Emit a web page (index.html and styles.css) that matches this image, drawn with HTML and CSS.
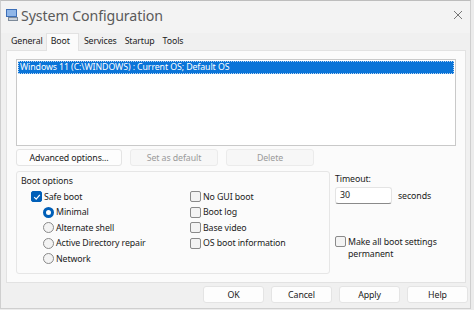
FILE: index.html
```html
<!DOCTYPE html>
<html>
<head>
<meta charset="utf-8">
<link rel="stylesheet" href="styles.css">
</head>
<body>
<div class="window">
  <div class="titlebar">
    <svg class="appicon" width="14" height="14" viewBox="0 0 14 14">
      <rect x="1" y="1" width="11" height="8" fill="#3d6fb8"/>
      <rect x="2" y="2" width="9" height="6" fill="#8fb6e8"/>
      <rect x="3" y="9" width="10" height="4" fill="#7d8a99"/>
      <rect x="4" y="10" width="8" height="2" fill="#c9d1da"/>
    </svg>
    <span class="title">System Configuration</span>
    <span class="close">
      <svg width="10" height="10" viewBox="0 0 10 10"><path d="M1 1 L9 9 M9 1 L1 9" stroke="#777" stroke-width="1"/></svg>
    </span>
  </div>
  <div class="tabs">
    <span class="tab">General</span>
    <span class="tab active">Boot</span>
    <span class="tab">Services</span>
    <span class="tab">Startup</span>
    <span class="tab">Tools</span>
  </div>
  <div class="panel">
    <div class="listbox">
      <div class="row selected">Windows 11 (C:\WINDOWS) : Current OS; Default OS</div>
    </div>
    <div class="btnrow">
      <button class="btn wide">Advanced options...</button>
      <button class="btn mid" disabled>Set as default</button>
      <button class="btn mid" disabled>Delete</button>
    </div>
    <div class="lower">
      <div class="group">
        <div class="glabel">Boot options</div>
        <div class="gcols">
          <div class="gleft">
            <label class="opt"><span class="cb checked"><svg width="8" height="8" viewBox="0 0 8 8"><path d="M1.2 4.2 L3.2 6.2 L6.8 1.8" fill="none" stroke="#fff" stroke-width="1.2"/></svg></span>Safe boot</label>
            <div class="radios">
              <label class="opt"><span class="rb on"></span>Minimal</label>
              <label class="opt"><span class="rb"></span>Alternate shell</label>
              <label class="opt"><span class="rb"></span>Active Directory repair</label>
              <label class="opt"><span class="rb"></span>Network</label>
            </div>
          </div>
          <div class="gright">
            <label class="opt"><span class="cb"></span>No GUI boot</label>
            <label class="opt"><span class="cb"></span>Boot log</label>
            <label class="opt"><span class="cb"></span>Base video</label>
            <label class="opt"><span class="cb"></span>OS boot information</label>
          </div>
        </div>
      </div>
      <div class="side">
        <div class="tlabel">Timeout:</div>
        <div class="trow">
          <div class="input">30</div>
          <span class="unit">seconds</span>
        </div>
        <label class="opt perm"><span class="cb"></span><span>Make all boot settings<br>permanent</span></label>
      </div>
    </div>
  </div>
  <div class="footer">
    <button class="btn foot">OK</button>
    <button class="btn foot">Cancel</button>
    <button class="btn foot">Apply</button>
    <button class="btn foot">Help</button>
  </div>
</div>
</body>
</html>
```

FILE: styles.css
```css
* { box-sizing: border-box; }
html, body { margin: 0; padding: 0; }
body {
  width: 474px;
  height: 310px;
  overflow: hidden;
  background: #ececec;
  font-family: "Noto Sans", "Open Sans", sans-serif;
  font-size: 8.8px;
  letter-spacing: -0.1px;
  color: #1a1a1a;
}
.window {
  width: 471px;
  height: 309px;
  background: #f0f0f0;
  border: 1px solid #cfcfcf;
  border-top-color: #bdbdbd;
  display: flex;
  flex-direction: column;
}
.titlebar {
  height: 32px;
  display: flex;
  align-items: center;
  padding-left: 4px;
  background: #f3f3f3;
}
.appicon { margin-right: 2px; margin-top: -4px; }
.title {
  font-size: 14.2px;
  color: #5a5a5a;
  flex: 1;
  margin-top: -3px;
}
.close {
  width: 20px;
  display: flex;
  justify-content: center;
  margin-right: 2px;
  margin-top: -5px;
}
.tabs {
  display: flex;
  align-items: flex-end;
  height: 17px;
  padding-left: 5px;
}
.tab {
  padding: 0 3px 2px 5px;
  color: #222;
  line-height: 14px;
}
.tab.active {
  background: #fbfbfb;
  border: 1px solid #e2e2e2;
  border-bottom: none;
  padding: 0 8px 3px 4px;
  margin-bottom: -1px;
  position: relative;
  z-index: 1;
}
.panel {
  margin: 0 4px 0 5px;
  height: 233px;
  background: #fbfbfb;
  border: 1px solid #e2e2e2;
  padding: 8px 9px 8px 9px;
  display: flex;
  flex-direction: column;
}
.listbox {
  height: 88px;
  background: #fff;
  border: 1px solid #c9c9c9;
  padding: 1px 1px;
}
.row {
  height: 13px;
  line-height: 11px;
  padding-left: 1px;
}
.row.selected {
  background: #0a74d8;
  color: #fff;
  border: 1px dotted #bcd6f2;
}
.btnrow {
  display: flex;
  gap: 8px;
  margin-top: 3px;
}
.btn {
  font-family: inherit;
  font-size: 8.8px;
  letter-spacing: -0.1px;
  height: 17px;
  background: #fdfdfd;
  border: 1px solid #e4e4e4;
  border-radius: 3px;
  color: #1a1a1a;
  padding: 0;
}
.btn:disabled { color: #9a9a9a; background: #f7f7f7; border-color: #ebebeb; }
.btn.wide { width: 106px; }
.btn.mid { width: 88px; }
.lower {
  display: flex;
  margin-top: 5px;
  gap: 5px;
}
.group {
  width: 314px;
  height: 103px;
  border: 1px solid #e6e6e6;
  border-radius: 3px;
  padding: 3px 0 0 4px;
}
.glabel { line-height: 12px; color: #1a1a1a; }
.gcols { display: flex; }
.gleft { width: 169px; padding-left: 10px; padding-top: 2px; }
.radios { padding-left: 12px; }
.gright { padding-top: 2px; }
.opt {
  display: flex;
  align-items: center;
  height: 15.5px;
  white-space: nowrap;
}
.cb {
  width: 11px;
  height: 11px;
  border: 1px solid #8a8a8a;
  border-radius: 2px;
  background: #f3f3f3;
  margin-right: 2px;
  display: flex;
  align-items: center;
  justify-content: center;
  flex: none;
}
.cb.checked { background: #005fb8; border-color: #005fb8; }
.rb {
  width: 11px;
  height: 11px;
  border: 1px solid #8a8a8a;
  border-radius: 50%;
  background: #f3f3f3;
  margin-right: 2px;
  flex: none;
}
.rb.on {
  background: #fff;
  border: 3px solid #005fb8;
}
.side { padding-top: 2px; }
.tlabel { line-height: 12px; }
.trow { display: flex; align-items: center; margin-top: 2px; }
.input {
  width: 57px;
  height: 17px;
  background: #fff;
  border: 1px solid #e4e4e4;
  border-bottom-color: #8a8a8a;
  border-radius: 3px;
  padding-left: 4px;
  line-height: 15px;
}
.unit { margin-left: 6px; }
.perm {
  margin-top: 32px;
  align-items: flex-start;
  height: auto;
  line-height: 12px;
}
.footer {
  flex: 1;
  display: flex;
  justify-content: flex-end;
  align-items: center;
  gap: 7px;
  padding-right: 2px;
  padding-bottom: 2px;
}
.btn.foot { width: 61px; }
```
